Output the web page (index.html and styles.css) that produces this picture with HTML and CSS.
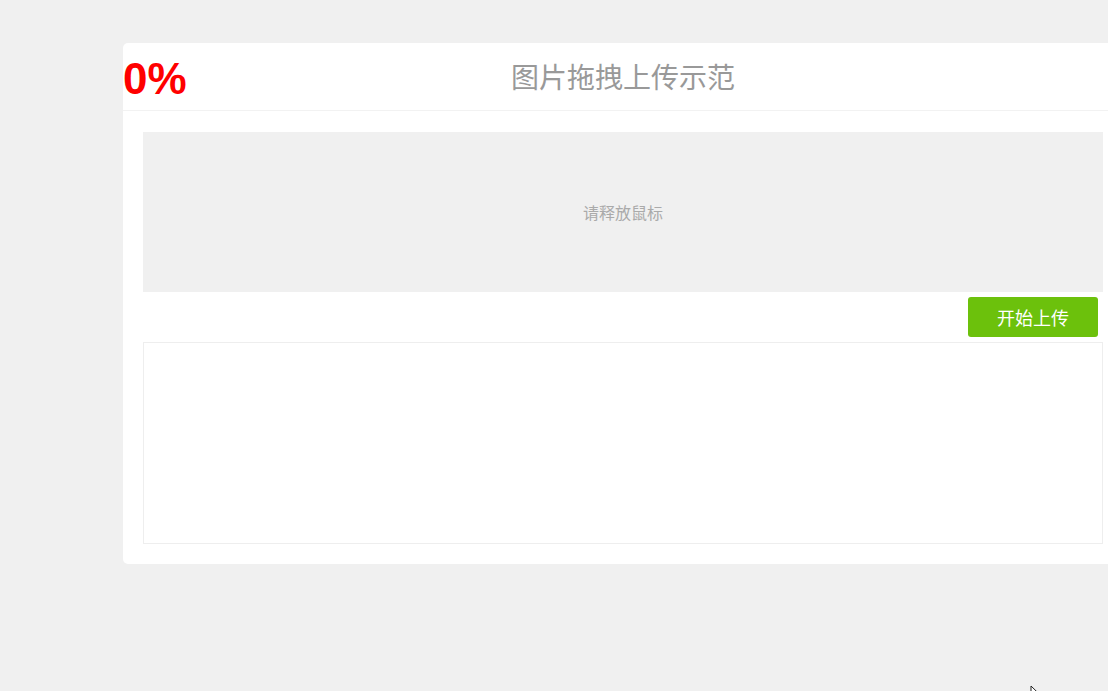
FILE: index.html
```html
<!DOCTYPE html>
<html lang="zh">
<head>
<meta charset="utf-8">
<title>图片拖拽上传示范</title>
<link rel="stylesheet" href="styles.css">
</head>
<body>
<div class="panel">
  <div class="panel-head">
    <span class="percent">0%</span>
    <h1 class="title">图片拖拽上传示范</h1>
  </div>
  <div class="panel-body">
    <div class="dropzone">请释放鼠标</div>
    <div class="actions">
      <button class="upload-btn">开始上传</button>
    </div>
    <div class="preview"></div>
  </div>
</div>
<svg class="cursor" width="12" height="18" viewBox="0 0 12 18"><path d="M1 1 L1 14 L4 11 L6.5 16.5 L8.5 15.6 L6 10.2 L10.5 10.2 Z" fill="#fff" stroke="#222" stroke-width="1"/></svg>
</body>
</html>
```
FILE: styles.css
```css
html, body {
  margin: 0;
  padding: 0;
}
body {
  background: #f0f0f0;
  font-family: "Liberation Sans", "Noto Sans CJK SC", sans-serif;
  width: 1108px;
  height: 691px;
  overflow: hidden;
  position: relative;
}
.panel {
  margin: 43px 0 0 123px;
  width: 1000px;
  background: #fff;
  border-radius: 5px;
}
.panel-head {
  position: relative;
  height: 67px;
  border-bottom: 1px solid #f2f2f2;
  display: flex;
  align-items: center;
  justify-content: center;
}
.percent {
  position: absolute;
  left: 0;
  top: 12px;
  color: #f00;
  font-weight: bold;
  font-size: 44px;
  line-height: 48px;
}
.title {
  margin: 0;
  padding-top: 4px;
  font-weight: normal;
  font-size: 28px;
  color: #999;
  line-height: 36px;
}
.panel-body {
  padding: 21px 20px 20px 20px;
}
.dropzone {
  height: 160px;
  background: #f0f0f0;
  color: #aaa;
  font-size: 16px;
  display: flex;
  align-items: center;
  justify-content: center;
}
.actions {
  display: flex;
  justify-content: flex-end;
  padding: 5px 5px 0 0;
}
.upload-btn {
  width: 130px;
  height: 40px;
  border: none;
  border-radius: 3px;
  background: #6cc10c;
  color: #fff;
  font-size: 18px;
  font-family: "Liberation Sans", "Noto Sans CJK SC", sans-serif;
  padding: 0;
}
.preview {
  margin-top: 5px;
  height: 200px;
  border: 1px solid #eee;
}
.cursor {
  position: absolute;
  left: 1030px;
  top: 685px;
}
```
